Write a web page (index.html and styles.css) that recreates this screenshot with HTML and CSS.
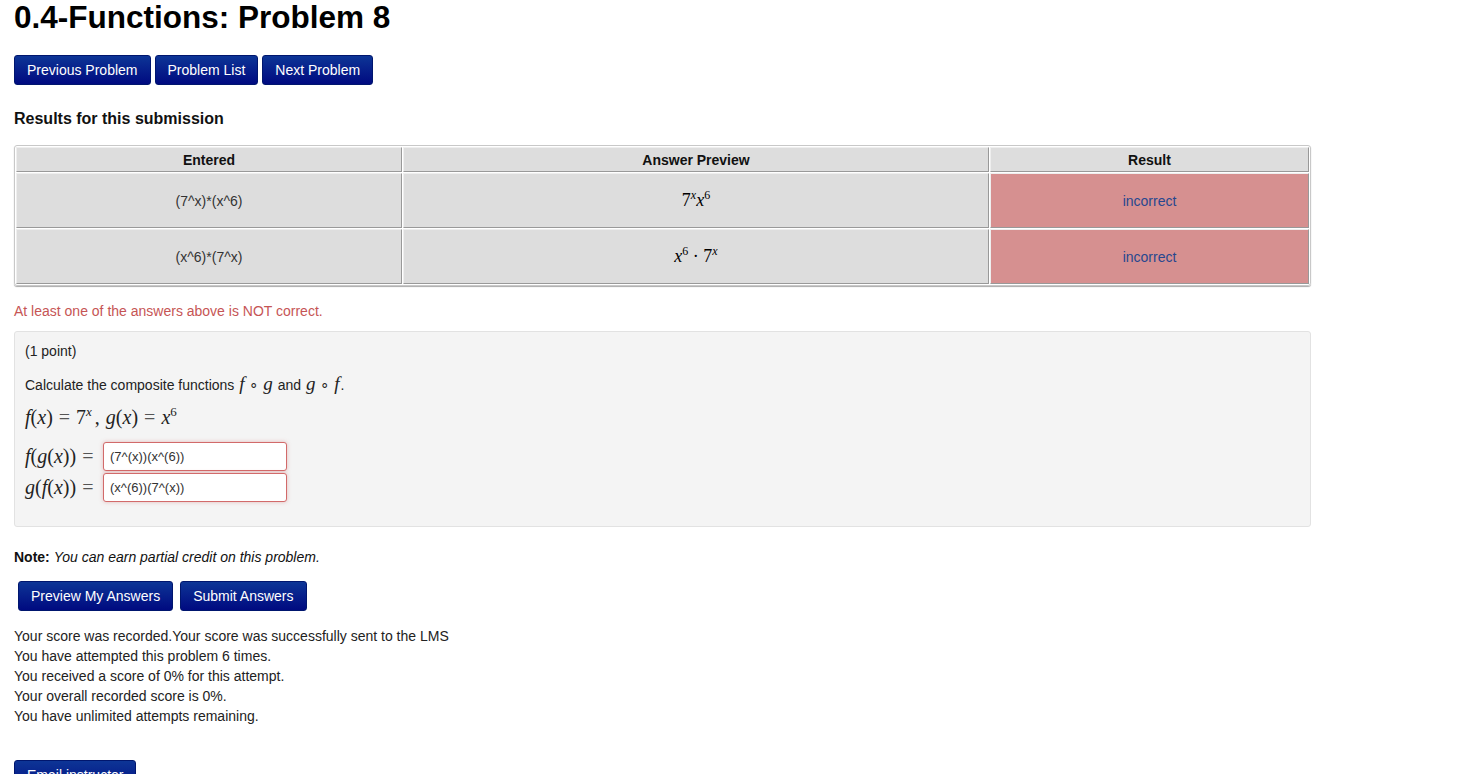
FILE: index.html
```html
<!DOCTYPE html>
<html lang="en">
<head>
    <meta charset="UTF-8">
    <title>0.4-Functions: Problem 8</title>
    <link rel="stylesheet" href="styles.css">
</head>
<body>
    <h1>0.4-Functions: Problem 8</h1>
    <div class="nav-buttons">
        <button class="btn">Previous Problem</button>
        <button class="btn">Problem List</button>
        <button class="btn">Next Problem</button>
    </div>

    <h3 class="results-title">Results for this submission</h3>
    <table class="attempt-results">
        <tr>
            <th class="col-entered">Entered</th>
            <th class="col-preview">Answer Preview</th>
            <th class="col-result">Result</th>
        </tr>
        <tr>
            <td>(7^x)*(x^6)</td>
            <td class="math">7<sup class="m">x</sup><span class="m">x</span><sup>6</sup></td>
            <td class="result-bad">incorrect</td>
        </tr>
        <tr>
            <td>(x^6)*(7^x)</td>
            <td class="math"><span class="m">x</span><sup>6</sup> &middot; 7<sup class="m">x</sup></td>
            <td class="result-bad">incorrect</td>
        </tr>
    </table>

    <p class="error-msg">At least one of the answers above is NOT correct.</p>

    <div class="problem">
        <p class="points">(1 point)</p>
        <p class="intro">Calculate the composite functions <span class="m">f</span> <span class="op">&#8728;</span> <span class="m">g</span> and <span class="m">g</span> <span class="op">&#8728;</span> <span class="m">f</span>.</p>
        <p class="def tex"><span class="m">f</span>(<span class="m">x</span>)<span class="eq">=</span>7<sup class="m">x</sup><span class="comma">,</span><span class="m">g</span>(<span class="m">x</span>)<span class="eq">=</span><span class="m">x</span><sup>6</sup></p>
        <div class="answers">
            <div class="answer-row">
                <span class="label tex"><span class="m">f</span>(<span class="m">g</span>(<span class="m">x</span>))<span class="eq">=</span></span>
                <input class="answer incorrect" type="text" value="(7^(x))(x^(6))">
            </div>
            <div class="answer-row">
                <span class="label tex"><span class="m">g</span>(<span class="m">f</span>(<span class="m">x</span>))<span class="eq">=</span></span>
                <input class="answer incorrect" type="text" value="(x^(6))(7^(x))">
            </div>
        </div>
    </div>

    <p class="note"><b>Note:</b> <i>You can earn partial credit on this problem.</i></p>

    <div class="submit-buttons">
        <button class="btn">Preview My Answers</button>
        <button class="btn">Submit Answers</button>
    </div>

    <div class="score">
        Your score was recorded.Your score was successfully sent to the LMS<br>
        You have attempted this problem 6 times.<br>
        You received a score of 0% for this attempt.<br>
        Your overall recorded score is 0%.<br>
        You have unlimited attempts remaining.
    </div>

    <div class="email">
        <button class="btn tall">Email instructor</button>
    </div>
</body>
</html>
```

FILE: styles.css
```css
body {
    font-family: "Liberation Sans", Arial, sans-serif;
    font-size: 14px;
    color: #222;
    background-color: #fff;
    margin: 0;
    padding: 0 14px;
    width: 1297px;
}
h1 {
    font-size: 31.5px;
    font-weight: bold;
    color: #000;
    margin: 0;
    line-height: 34px;
}
.nav-buttons {
    display: flex;
    gap: 4px;
    margin-top: 21px;
}
.btn {
    font-family: "Liberation Sans", Arial, sans-serif;
    font-size: 14px;
    color: #fff;
    background: linear-gradient(#0d3596, #000a80);
    border: 1px solid #00166e;
    border-radius: 3px;
    height: 30px;
    padding: 0 12px;
    cursor: pointer;
}
.btn.tall {
    height: 34px;
    padding: 0 12px 4px 12px;
}
.results-title {
    font-size: 16px;
    font-weight: bold;
    color: #111;
    margin: 24px 0 16px 0;
    line-height: 20px;
}
.attempt-results {
    width: 1297px;
    border: 1px solid #c8c8c8;
    border-radius: 3px;
    border-spacing: 1px;
    box-shadow: 0 1px 1px #aaa;
}
.attempt-results th,
.attempt-results td {
    background-color: #ddd;
    border-top: 1px solid #eee;
    border-left: 1px solid #eee;
    border-right: 1px solid #999;
    border-bottom: 1px solid #999;
    text-align: center;
    padding: 0;
}
.attempt-results th {
    font-size: 14px;
    font-weight: bold;
    color: #111;
    height: 23px;
}
.attempt-results td {
    height: 53px;
    font-size: 14px;
    color: #333;
}
.col-entered { width: 384px; }
.col-preview { width: 584px; }
.attempt-results td.result-bad {
    background-color: #d69090;
    color: #27478f;
}
.attempt-results td.math {
    font-family: "Liberation Serif", "Times New Roman", serif;
    font-size: 18px;
    color: #000;
}
.math sup {
    font-size: 12px;
    vertical-align: 7px;
    line-height: 0;
}
.m {
    font-family: "Liberation Serif", "Times New Roman", serif;
    font-style: italic;
}
.error-msg {
    color: #c65555;
    margin: 17px 0 12px 0;
}
.problem {
    background-color: #f4f4f4;
    border: 1px solid #e2e2e2;
    border-radius: 3px;
    padding: 10px 10px 24px 10px;
    box-sizing: border-box;
    width: 1297px;
}
.problem p {
    margin: 0;
    line-height: 18px;
}
.problem .points {
    margin-bottom: 15px;
}
.problem .intro {
    margin-bottom: 14px;
}
.problem .def {
    margin-bottom: 16px;
}
.intro .m {
    font-size: 19px;
    margin: 0 1px;
}
.tex {
    font-family: "Liberation Serif", "Times New Roman", serif;
    font-size: 20px;
    color: #222;
}
.tex sup {
    font-size: 13px;
    vertical-align: 8px;
    line-height: 0;
}
.eq {
    margin: 0 6px;
    color: #555;
}
.comma {
    margin: 0 6px 0 3px;
}
.op {
    font-size: 15px;
}
.answers {
    display: flex;
    flex-direction: column;
    gap: 2px;
}
.answer-row {
    display: flex;
    align-items: center;
}
.label {
    width: 78px;
    white-space: nowrap;
}
.answer {
    font-family: "Liberation Sans", Arial, sans-serif;
    font-size: 13px;
    color: #333;
    width: 184px;
    height: 29px;
    box-sizing: border-box;
    padding: 4px 6px;
    border: 1px solid #d26a6a;
    border-radius: 3px;
    background: #fff;
    box-shadow: 0 0 4px rgba(200, 80, 80, 0.35);
}
.note {
    margin: 22px 0 16px 0;
    color: #111;
}
.submit-buttons {
    display: flex;
    gap: 7px;
    padding-left: 4px;
}
.score {
    margin-top: 15px;
    line-height: 20px;
    color: #222;
}
.email {
    margin-top: 34px;
}
```
